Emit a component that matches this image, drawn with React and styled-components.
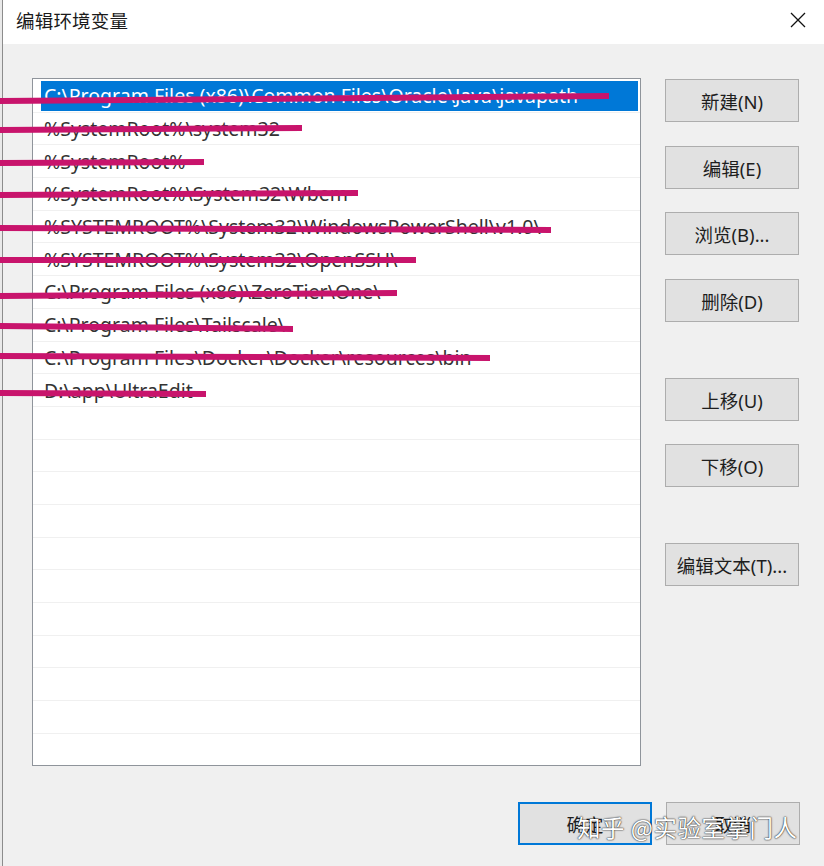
import React from "react";
import styled, { createGlobalStyle } from "styled-components";

const GlobalStyle = createGlobalStyle`
  html, body {
    margin: 0;
    padding: 0;
    background: #ffffff;
  }
  * {
    box-sizing: border-box;
  }
`;

const paths = [
  "C:\\Program Files (x86)\\Common Files\\Oracle\\Java\\javapath",
  "%SystemRoot%\\system32",
  "%SystemRoot%",
  "%SystemRoot%\\System32\\Wbem",
  "%SYSTEMROOT%\\System32\\WindowsPowerShell\\v1.0\\",
  "%SYSTEMROOT%\\System32\\OpenSSH\\",
  "C:\\Program Files (x86)\\ZeroTier\\One\\",
  "C:\\Program Files\\Tailscale\\",
  "C:\\Program Files\\Docker\\Docker\\resources\\bin",
  "D:\\app\\UltraEdit",
];

// redaction strokes drawn over the screenshot: [y at left, x end, y at end]
const strikes = [
  [101, 609, 96],
  [130, 302, 128],
  [163, 204, 162],
  [195, 358, 193],
  [228, 551, 230],
  [260, 416, 260],
  [296, 397, 293],
  [326, 293, 329],
  [356, 490, 358],
  [393, 206, 394],
];

const Screen = styled.div`
  position: relative;
  width: 824px;
  height: 866px;
  display: flex;
  overflow: hidden;
  font-family: "Noto Sans", "Noto Sans CJK SC", sans-serif;
  color: #222;
`;

const BackWindow = styled.div`
  width: 3px;
  background: #e9e9e9;
  border-right: 1px solid #8c8c8c;
  flex: none;
`;

const Dialog = styled.div`
  flex: 1;
  display: flex;
  flex-direction: column;
  background: #f0f0f0;
`;

const TitleBar = styled.div`
  height: 44px;
  background: #ffffff;
  display: flex;
  align-items: center;
  justify-content: space-between;
  padding: 0 17px 4px 13px;
`;

const Title = styled.div`
  font-family: "Noto Sans CJK SC", sans-serif;
  font-size: 18.5px;
  color: #1a1a1a;
  letter-spacing: 0.2px;
`;

const Body = styled.div`
  flex: 1;
  display: flex;
  flex-direction: column;
  padding: 34px 24px 0 29px;
`;

const Main = styled.div`
  display: flex;
  gap: 24px;
`;

const ListBox = styled.div`
  width: 609px;
  height: 688px;
  background: #ffffff;
  border: 1px solid #8f949b;
  overflow: hidden;
  padding-top: 1px;
`;

const Row = styled.div`
  height: 32.7px;
  border-bottom: 1px solid #f0f0f0;
  display: flex;
  padding: 1px 2px 1px 8px;
`;

const Cell = styled.div`
  flex: 1;
  display: flex;
  align-items: center;
  padding-left: 3px;
  font-size: 19.5px;
  white-space: nowrap;
  overflow: hidden;
  color: ${(p) => (p.$selected ? "#ffffff" : "#333333")};
  background: ${(p) => (p.$selected ? "#0078d7" : "transparent")};
`;

const ButtonColumn = styled.div`
  display: flex;
  flex-direction: column;
  padding-top: 1px;
`;

const Button = styled.div`
  width: 134px;
  height: 43px;
  margin-top: ${(p) => (p.$gap ? p.$gap : 0)}px;
  display: flex;
  align-items: center;
  justify-content: center;
  background: #e1e1e1;
  border: ${(p) => (p.$default ? "2px solid #0078d7" : "1px solid #adadad")};
  font-size: 18.5px;
  color: #1e1e1e;
  white-space: nowrap;
`;

const Footer = styled.div`
  display: flex;
  justify-content: flex-end;
  gap: 14px;
  margin-top: 36px;
`;

const Overlay = styled.svg`
  position: absolute;
  left: 0;
  top: 0;
  pointer-events: none;
`;

const Watermark = styled.div`
  position: absolute;
  left: 577px;
  top: 810px;
  font-family: "Noto Sans CJK SC", sans-serif;
  font-size: 23.5px;
  color: #ffffff;
  letter-spacing: 0.5px;
  white-space: nowrap;
  text-shadow: 0 0 2px rgba(0, 0, 0, 0.75), 0 0 1px rgba(0, 0, 0, 0.9);
  pointer-events: none;
`;

const CloseIcon = () => (
  <svg width="18" height="18" viewBox="0 0 18 18">
    <path d="M2 2 L16 16 M16 2 L2 16" stroke="#111" strokeWidth="1.3" fill="none" />
  </svg>
);

const rightButtons = [
  { label: "新建(N)", gap: 0 },
  { label: "编辑(E)", gap: 24 },
  { label: "浏览(B)...", gap: 23 },
  { label: "删除(D)", gap: 24 },
  { label: "上移(U)", gap: 56 },
  { label: "下移(O)", gap: 23 },
  { label: "编辑文本(T)...", gap: 56 },
];

export default function App() {
  const rows = Array.from({ length: 21 }, (_, i) => paths[i] || "");

  return (
    <>
      <GlobalStyle />
      <Screen>
        <BackWindow />
        <Dialog>
          <TitleBar>
            <Title>编辑环境变量</Title>
            <CloseIcon />
          </TitleBar>
          <Body>
            <Main>
              <ListBox>
                {rows.map((text, i) => (
                  <Row key={i}>
                    <Cell $selected={i === 0}>{text}</Cell>
                  </Row>
                ))}
              </ListBox>
              <ButtonColumn>
                {rightButtons.map((b) => (
                  <Button key={b.label} $gap={b.gap}>
                    {b.label}
                  </Button>
                ))}
              </ButtonColumn>
            </Main>
            <Footer>
              <Button $default>确定</Button>
              <Button>取消</Button>
            </Footer>
          </Body>
        </Dialog>
        <Overlay width="824" height="866">
          {strikes.map(([y1, x2, y2], i) => (
            <line key={i} x1="0" y1={y1} x2={x2} y2={y2} stroke="#c8146c" strokeWidth="6" />
          ))}
        </Overlay>
        <Watermark>知乎 @实验室掌门人</Watermark>
      </Screen>
    </>
  );
}
